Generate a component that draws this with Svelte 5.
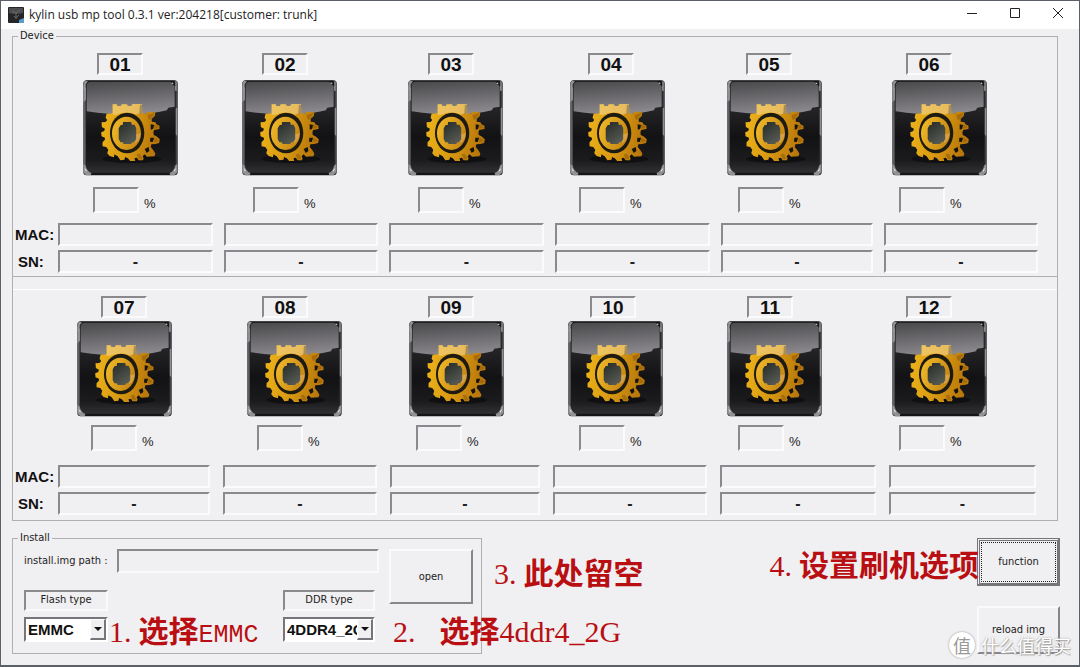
<script>
  const banks = [
    { id: 'upper', ports: ['01', '02', '03', '04', '05', '06'] },
    { id: 'lower', ports: ['07', '08', '09', '10', '11', '12'] },
  ]

  let flashType = $state('EMMC')
  let ddrType = $state('4DDR4_2G')
  let imgPath = $state('')
</script>

{#snippet gear()}
  <svg class="gear" viewBox="25 27 282 288" preserveAspectRatio="none" aria-hidden="true">
    <rect x="26" y="28" width="280" height="285" rx="10" fill="#1b1b1d" />
    <rect x="27" y="29" width="278" height="283" rx="10" fill="url(#edge)" />
    <path d="M26 40L34 52V86L26 94ZM305 110V196L300 190V112Z" fill="#8f8d91" />
    <rect x="34" y="33" width="265" height="272" rx="10" fill="url(#face)" />
    <path d="M36 47Q36 32 48 32H284Q297 32 297 45V107L278 110L274 118L250 123Q160 139 36 121Z" fill="url(#gloss)" />
    <ellipse cx="170" cy="264" rx="88" ry="12" fill="#0c0c0e" opacity="0.7" />
    <path
      fill="url(#gold)"
      d="M113 100H125L127 105H138L140 100H155L158 105H168L172 99H200L201 127L213 128L216 122L240 124L238 135L229 143V152L240 154L243 160L252 164V174L236 177L234 184L235 192L243 196L253 205L251 216L240 219L228 220L226 228L234 238L240 248L237 256L215 257L208 250L202 256L205 262L203 268H190L185 260L178 262L180 270H165L158 262L150 258L148 266L136 268L128 256L118 250L117 259L104 255L97 247L100 236L94 228L83 226V214L90 206V200L80 196L79 184L88 180L90 173L81 168L80 154L92 153L97 147L92 140L95 128L113 127Z"
    />
    <path d="M226 160L236 162L233 174L226 176ZM225 200L236 200L232 213L224 212ZM208 234L220 228L222 240L214 246Z" fill="#15130f" />
    <path d="M216 132L238 126L226 145L220 147ZM236 160L250 168L236 174ZM238 200L250 209L236 214ZM184 250L194 248L202 265H190Z" fill="#8e5a09" opacity="0.55" />
    <ellipse cx="156" cy="186" rx="51" ry="61" fill="#1d1a12" />
    <ellipse cx="154" cy="187" rx="43" ry="50" fill="url(#ring)" />
    <path d="M144 153H168L170 161H178L183 172V205L177 214H171L168 219H146L143 214H136L131 204V172L137 162H143Z" fill="url(#hole)" />
    <path d="M183 188Q191 190 197 186Q194 209 181 215L177 214L183 205Z" fill="#e2b878" opacity="0.5" />
    <path d="M113 100H125L127 105H138L140 100H155L158 105H168L172 99H200L201 127Q185 128 184 131Q154 118 124 131H113Z" fill="#f3d693" opacity="0.6" />
    <path d="M194 101H200L201 127L192 130Z" fill="#8f7a50" opacity="0.7" />
    <path d="M26 278L33 284Q36 301 50 306L48 312H34L26 303ZM305 278L298 284Q296 301 282 306L284 312H297L305 303Z" fill="#929094" />
    <path d="M29 290L36 298L34 302ZM302 290L295 298L297 302Z" fill="#eeedef" />
    <path d="M29 30L40 31L33 39L31 60L27 58ZM297 31H303V60H299Z" fill="#98969a" />
    <path d="M284 31H299V47L294 42L290 40Z" fill="#171719" />
    <rect x="288" y="35" width="5" height="4" fill="#bbb" />
  </svg>
{/snippet}

<svg class="defs" width="0" height="0" aria-hidden="true">
  <defs>
    <linearGradient id="edge" x1="0" y1="0" x2="1" y2="0">
      <stop offset="0" stop-color="#77757a" />
      <stop offset="0.04" stop-color="#151517" />
      <stop offset="0.97" stop-color="#151517" />
      <stop offset="1" stop-color="#56555a" />
    </linearGradient>
    <linearGradient id="face" x1="0" y1="0" x2="0" y2="1">
      <stop offset="0.3" stop-color="#242326" />
      <stop offset="0.6" stop-color="#121214" />
      <stop offset="0.86" stop-color="#1b1b1d" />
      <stop offset="1" stop-color="#303032" />
    </linearGradient>
    <linearGradient id="gloss" x1="0.3" y1="0" x2="0.5" y2="1">
      <stop offset="0" stop-color="#4c4b4e" />
      <stop offset="1" stop-color="#8d8b8f" />
    </linearGradient>
    <linearGradient id="gold" x1="0" y1="0" x2="1" y2="0.2">
      <stop offset="0" stop-color="#eeb51b" />
      <stop offset="0.55" stop-color="#d99a12" />
      <stop offset="1" stop-color="#b9780b" />
    </linearGradient>
    <linearGradient id="ring" x1="0" y1="0" x2="1" y2="0.4">
      <stop offset="0" stop-color="#f2bc2a" />
      <stop offset="1" stop-color="#c98a15" />
    </linearGradient>
    <linearGradient id="hole" x1="0" y1="0" x2="0.6" y2="1">
      <stop offset="0" stop-color="#262a28" />
      <stop offset="1" stop-color="#555951" />
    </linearGradient>
  </defs>
</svg>

<div class="window">
  <header class="titlebar">
    <svg class="app-icon" viewBox="0 0 16 16" aria-hidden="true">
      <rect width="16" height="16" rx="1" fill="#252527" />
      <path d="M1 1H15V6Q8 8 1 6Z" fill="#4d4c4f" />
      <path d="M4 4L8 6L12 3M8 6V12M6 9L8 11L11 8" stroke="#67666a" stroke-width="1" fill="none" />
      <path d="M11 13L16 11V16H11Z" fill="#5a9ccb" />
    </svg>
    <span class="title">kylin usb mp tool 0.3.1 ver:204218[customer: trunk]</span>
    <div class="window-buttons">
      <button aria-label="Minimize"><svg viewBox="0 0 12 12"><path d="M1 6.5H11" /></svg></button>
      <button aria-label="Maximize"><svg viewBox="0 0 12 12"><path d="M1.5 1.5H10.5V10.5H1.5Z" /></svg></button>
      <button aria-label="Close"><svg viewBox="0 0 12 12"><path d="M1 1L11 11M11 1L1 11" /></svg></button>
    </div>
  </header>

  <main>
    <fieldset class="devices">
      <legend>Device</legend>
      {#each banks as bank}
        <section class="bank {bank.id}">
          <div class="row numbers">
            {#each bank.ports as port}
              <span class="number sunken">{port}</span>
            {/each}
          </div>
          <div class="row icons">
            {#each bank.ports as port}
              {@render gear()}
            {/each}
          </div>
          <div class="row progress">
            {#each bank.ports as port}
              <label class="percent">
                <input class="sunken" readonly aria-label="Progress {port}" />%
              </label>
            {/each}
          </div>
          <div class="fields">
            <label for="mac-{bank.ports[0]}">MAC:</label>
            <div class="row">
              {#each bank.ports as port}
                <input id="mac-{port}" class="sunken" readonly aria-label="MAC {port}" />
              {/each}
            </div>
          </div>
          <div class="fields">
            <label for="sn-{bank.ports[0]}">SN:</label>
            <div class="row">
              {#each bank.ports as port}
                <input id="sn-{port}" class="sunken" readonly value="-" aria-label="SN {port}" />
              {/each}
            </div>
          </div>
        </section>
      {/each}
    </fieldset>

    <footer>
      <fieldset class="install">
        <legend>Install</legend>
        <div class="panel">
          <div class="settings">
            <div class="path">
              <label for="img-path">install.img path :</label>
              <input id="img-path" class="thin" bind:value={imgPath} />
            </div>
            <div class="types">
              <div class="type">
                <label class="thin" for="flash-type">Flash type</label>
                <div class="combo">
                  <select id="flash-type" bind:value={flashType}>
                    <option>EMMC</option>
                  </select>
                  <span class="arrow"></span>
                </div>
              </div>
              <div class="type ddr">
                <label class="thin" for="ddr-type">DDR type</label>
                <div class="combo">
                  <select id="ddr-type" bind:value={ddrType}>
                    <option>4DDR4_2G</option>
                  </select>
                  <span class="arrow"></span>
                </div>
              </div>
            </div>
          </div>
          <button class="raised open">open</button>
        </div>
      </fieldset>

      <div class="actions">
        <button class="raised focused">function</button>
        <button class="raised">reload img</button>
      </div>

      <p class="note note-1"><span>1.</span><span><b>选择</b><span class="mono">EMMC</span></span></p>
      <p class="note note-2"><span>2.</span><span><b>选择</b>4ddr4_2G</span></p>
      <p class="note note-3"><span>3.</span><b>此处留空</b></p>
      <p class="note note-4"><span>4.</span><b>设置刷机选项</b></p>
    </footer>
  </main>

  <div class="watermark">
    <span class="badge">值</span>
    <span>什么值得买</span>
  </div>
</div>

<style>
  :global(body) {
    margin: 0;
    background: #f0eff1;
  }

  * {
    box-sizing: border-box;
  }

  .defs {
    position: absolute;
  }

  .window {
    position: relative;
    min-height: 100vh;
    border: 1px solid #5b5f68;
    border-bottom-width: 2px;
    background: #f0eff1;
    color: #222;
    font: 11px/14px "DejaVu Sans Condensed", "Open Sans", sans-serif;
  }

  /* Title bar */
  .titlebar {
    display: flex;
    align-items: center;
    height: 28px;
    padding-left: 7px;
    background: #fff;
  }

  .app-icon {
    width: 16px;
    height: 16px;
    margin-right: 5px;
  }

  .title {
    flex: 1;
    font-family: "Open Sans", "Noto Sans", sans-serif;
    font-size: 12px;
  }

  .window-buttons {
    display: flex;
  }

  .window-buttons button {
    width: 43px;
    height: 28px;
    padding: 0;
    border: none;
    background: transparent;
  }

  .window-buttons svg {
    width: 12px;
    height: 12px;
    fill: none;
    stroke: #222;
    stroke-width: 1;
  }

  main {
    padding: 0 19px 0 11px;
  }

  fieldset {
    min-width: 0;
    margin: 0;
    padding: 0;
    border: 1px solid #b0aeb2;
  }

  legend {
    height: 14px;
    margin-left: 5px;
    padding: 0 2px;
  }

  input,
  select,
  button {
    color: inherit;
    font: inherit;
  }

  .sunken {
    min-width: 0;
    border: 2px solid;
    border-color: #8b898d #fbfbfc #fbfbfc #8b898d;
    border-radius: 0;
    outline: none;
    background: transparent;
  }

  .thin {
    border: 2px solid;
    border-color: #8b898d #f9f9fa #f9f9fa #8b898d;
    outline: none;
    background: transparent;
  }

  /* Device banks */
  .devices {
    margin-right: 2px;
  }

  .bank {
    display: flex;
    flex-direction: column;
  }

  .upper {
    padding: 10px 0 3px;
    border-bottom: 1px solid #b0aeb2;
  }

  .lower {
    margin-top: 12px;
    padding: 6px 0 5px;
    border-top: 1px solid #fff;
  }

  .row {
    display: grid;
    flex: 1;
  }

  .upper .numbers {
    padding-left: 84px;
    grid-template-columns: 165fr 166fr 160fr 158fr 160fr 151fr;
  }

  .upper .icons {
    padding-left: 70px;
    grid-template-columns: 159fr 166fr 162fr 157fr 165fr 165fr;
  }

  .upper .progress {
    padding-left: 80px;
    grid-template-columns: 160fr 165fr 161fr 159fr 161fr 158fr;
  }

  .upper .fields .row {
    grid-template-columns: 166fr 165fr 166fr 166fr 163fr 165fr;
  }

  .lower .numbers {
    padding-left: 88px;
    grid-template-columns: 161fr 166fr 162fr 157fr 159fr 151fr;
  }

  .lower .icons {
    padding-left: 64px;
    grid-template-columns: 170fr 162fr 159fr 159fr 165fr 165fr;
  }

  .lower .progress {
    padding-left: 78px;
    grid-template-columns: 166fr 159fr 163fr 159fr 161fr 158fr;
  }

  .lower .fields .row {
    grid-template-columns: 165fr 167fr 163fr 167fr 169fr 160fr;
  }

  .number {
    width: 46px;
    height: 22px;
    font: bold 19px/19px "Liberation Sans", Arial, sans-serif;
    text-align: center;
    color: #111;
  }

  .icons {
    margin: 5px 0 11px;
  }

  .lower .icons {
    margin: 3px 0 8px;
  }

  .gear {
    display: block;
    width: 95px;
    height: 96px;
  }

  .percent {
    display: flex;
    gap: 5px;
    height: 26px;
    font: 13px/34px "Liberation Sans", Arial, sans-serif;
  }

  .percent input {
    width: 46px;
    height: 26px;
  }

  .fields {
    display: flex;
    height: 23px;
    margin-top: 4px;
    padding-right: 8px;
  }

  .progress + .fields {
    margin-top: 10px;
  }

  .lower .progress + .fields {
    margin-top: 14px;
  }

  .fields label {
    width: 45px;
    padding-left: 2px;
    font: bold 15px/23px "Liberation Sans", Arial, sans-serif;
    color: #111;
  }

  .progress + .fields ~ .fields label {
    padding-left: 5px;
  }

  .fields input {
    margin-right: 11px;
    padding: 0;
    font: bold 16px/18px "Liberation Sans", Arial, sans-serif;
    text-align: center;
  }

  .lower .fields input {
    margin-right: 13px;
  }

  /* Install panel */
  footer {
    position: relative;
    display: flex;
    justify-content: space-between;
    padding-top: 10px;
  }

  .panel {
    display: grid;
    grid-template-columns: 355px 84px;
    gap: 10px;
    padding: 4px 8px 11px 11px;
  }

  .path {
    display: flex;
    align-items: center;
    margin-bottom: 17px;
  }

  .path label {
    width: 93px;
    white-space: nowrap;
  }

  .path input {
    flex: 1;
    min-width: 0;
    height: 24px;
  }

  .types {
    display: flex;
    justify-content: space-between;
    padding-right: 4px;
  }

  .type {
    display: flex;
    flex-direction: column;
    gap: 6px;
    width: 84px;
  }

  .ddr {
    width: 92px;
  }

  .type label {
    height: 21px;
    line-height: 16px;
    text-align: center;
  }

  .combo {
    display: grid;
    height: 25px;
    border: 2px solid;
    border-color: #77757a #fff #fff #77757a;
    background: #fff;
  }

  .combo select {
    grid-area: 1 / 1;
    min-width: 0;
    width: 100%;
    padding: 0 16px 0 2px;
    border: none;
    border-radius: 0;
    outline: none;
    appearance: none;
    background: transparent;
    font: bold 15px/20px "Liberation Sans", Arial, sans-serif;
    color: #111;
  }

  .arrow {
    grid-area: 1 / 1;
    justify-self: end;
    display: grid;
    place-items: center;
    width: 16px;
    border: 1px solid;
    border-color: #fff #77757a #77757a #fff;
    border-right-width: 2px;
    border-bottom-width: 2px;
    background: #f0eff1;
    pointer-events: none;
  }

  .arrow::before {
    content: "";
    border: 4px solid transparent;
    border-top-color: #111;
    border-bottom: none;
  }

  .raised {
    padding: 0;
    border: 2px solid;
    border-color: #fafafb #88868a #88868a #fafafb;
    border-radius: 0;
    background: #f0eff1;
  }

  .open {
    height: 55px;
  }

  .actions {
    display: flex;
    flex-direction: column;
    gap: 20px;
    padding-top: 7px;
  }

  .actions button {
    width: 83px;
    height: 48px;
  }

  .focused {
    border: 3px double #77757a;
    border-right-style: solid;
    border-bottom-style: solid;
    outline: 1px dotted #222;
    outline-offset: -5px;
  }

  /* Red step notes over the form */
  .note {
    position: absolute;
    display: flex;
    gap: 7px;
    margin: 0;
    color: #b90f12;
    font: 30px/30px "Liberation Serif", "Noto Sans CJK SC", serif;
    white-space: nowrap;
    pointer-events: none;
  }

  .mono {
    font-family: "Liberation Mono", monospace;
    font-size: 25px;
  }

  .note-1 {
    left: 97px;
    top: 96px;
  }

  .note-2 {
    left: 381px;
    top: 96px;
    gap: 24px;
  }

  .note-3 {
    left: 482px;
    top: 38px;
  }

  .note-4 {
    right: 81px;
    top: 30px;
  }

  .watermark {
    position: absolute;
    right: 8px;
    bottom: 7px;
    display: flex;
    align-items: center;
    gap: 6px;
    color: #fff;
    font: 18px/26px "Noto Sans CJK SC", sans-serif;
    text-shadow: 0 0 2px #999, 1px 1px 1px #aaa;
    pointer-events: none;
  }

  .badge {
    width: 26px;
    border-radius: 50%;
    background: #fff;
    box-shadow: 0 0 2px #888;
    color: #999;
    text-align: center;
    text-shadow: none;
  }
</style>
